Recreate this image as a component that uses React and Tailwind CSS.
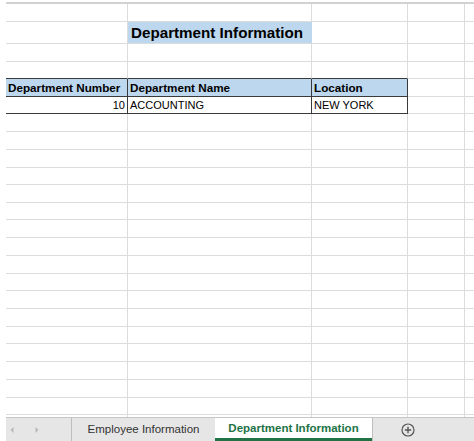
import React from 'react';

const cols = ['w-[122px]', 'w-[184px]', 'w-[96px]', 'w-[57px]', 'flex-1'];

// heights of the empty rows below the table
const restRows = [
  'h-[18px]', 'h-[18px]', 'h-[18px]', 'h-[17px]', 'h-[18px]', 'h-[17px]',
  'h-[18px]', 'h-[18px]', 'h-[18px]', 'h-[17px]', 'h-[18px]', 'h-[18px]',
  'h-[17px]', 'h-[18px]', 'h-[18px]', 'h-[18px]', 'h-[17px]', 'h-[18px]',
];

const EmptyRow = ({ h, darkBottom = false }) => (
  <div className={`flex shrink-0 ${h}`}>
    {cols.map((w, i) => (
      <div
        key={i}
        className={`${w} shrink-0 border-b ${i < 4 ? 'border-r' : ''} ${
          darkBottom && i < 3 ? 'border-b-[#3a3a3a]' : 'border-b-[#dcdcdc]'
        } border-r-[#dcdcdc]`}
      />
    ))}
  </div>
);

const TableCell = ({ w, children, className = '' }) => (
  <div className={`${w} shrink-0 flex items-center border-b border-r border-[#3a3a3a] ${className}`}>
    {children}
  </div>
);

const GridCell = ({ w, last = false }) => (
  <div className={`${w} shrink-0 border-b ${last ? '' : 'border-r'} border-[#dcdcdc]`} />
);

export default function App() {
  return (
    <div className="w-[474px] h-[441px] bg-white flex flex-col pl-[6px] overflow-hidden font-['Liberation_Sans',Arial,sans-serif] text-black">
      {/* top edge */}
      <div className="h-[4px] shrink-0 pt-[2px]">
        <div className="h-[2px] bg-[#d2d2d2]" />
      </div>

      {/* sheet */}
      <div className="flex-1 flex flex-col overflow-hidden">
        <EmptyRow h="h-[18px]" />

        {/* title row */}
        <div className="flex shrink-0 h-[22px]">
          <GridCell w={cols[0]} />
          <div className={`${cols[1]} shrink-0 bg-[#bdd7ee] border-b border-[#dcdcdc] flex items-center pl-[3px] text-[15.2px] font-bold leading-none`}>
            Department Information
          </div>
          <GridCell w={cols[2]} />
          <GridCell w={cols[3]} />
          <GridCell w={cols[4]} last />
        </div>

        <EmptyRow h="h-[18px]" />
        <EmptyRow h="h-[17px]" darkBottom />

        {/* header row */}
        <div className="flex shrink-0 h-[18px] text-[11.7px] font-bold leading-none">
          <TableCell w={cols[0]} className="bg-[#bdd7ee] pl-[2px]">Department Number</TableCell>
          <TableCell w={cols[1]} className="bg-[#bdd7ee] pl-[2px]">Department Name</TableCell>
          <TableCell w={cols[2]} className="bg-[#bdd7ee] pl-[2px]">Location</TableCell>
          <GridCell w={cols[3]} />
          <GridCell w={cols[4]} last />
        </div>

        {/* data row */}
        <div className="flex shrink-0 h-[17px] text-[11px] leading-none">
          <TableCell w={cols[0]} className="justify-end pr-[2px]">10</TableCell>
          <TableCell w={cols[1]} className="pl-[2px]">ACCOUNTING</TableCell>
          <TableCell w={cols[2]} className="pl-[2px]">NEW YORK</TableCell>
          <GridCell w={cols[3]} />
          <GridCell w={cols[4]} last />
        </div>

        {restRows.map((h, i) => (
          <EmptyRow key={i} h={h} />
        ))}
      </div>

      {/* sheet tabs */}
      <div className="h-[24px] shrink-0 flex bg-[#e6e6e6] border-t border-[#c6c6c6] text-[11.5px] leading-none">
        <div className="w-[66px] shrink-0 flex items-center gap-[19px] pl-[3px] border-r border-[#bdbdbd]">
          <svg width="6" height="8" viewBox="0 0 6 8">
            <path d="M4.5 1 L1.5 4 L4.5 7 Z" fill="#b8b8b8" />
          </svg>
          <svg width="6" height="8" viewBox="0 0 6 8">
            <path d="M1.5 1 L4.5 4 L1.5 7 Z" fill="#b8b8b8" />
          </svg>
        </div>
        <div className="w-[143px] shrink-0 flex items-center justify-center text-[#333]">
          Employee Information
        </div>
        <div className="w-[157px] shrink-0 flex items-center justify-center pt-[2px] bg-white border-b-[3px] border-[#217346] font-bold text-[#217346]">
          Department Information
        </div>
        <div className="flex-1 flex items-center pl-[28px] mr-[3px] border-l border-[#bdbdbd]">
          <svg width="14" height="14" viewBox="0 0 14 14">
            <circle cx="7" cy="7" r="6" fill="none" stroke="#555" strokeWidth="1.2" />
            <path d="M7 3.8 V10.2 M3.8 7 H10.2" stroke="#555" strokeWidth="1.4" />
          </svg>
        </div>
      </div>
    </div>
  );
}
